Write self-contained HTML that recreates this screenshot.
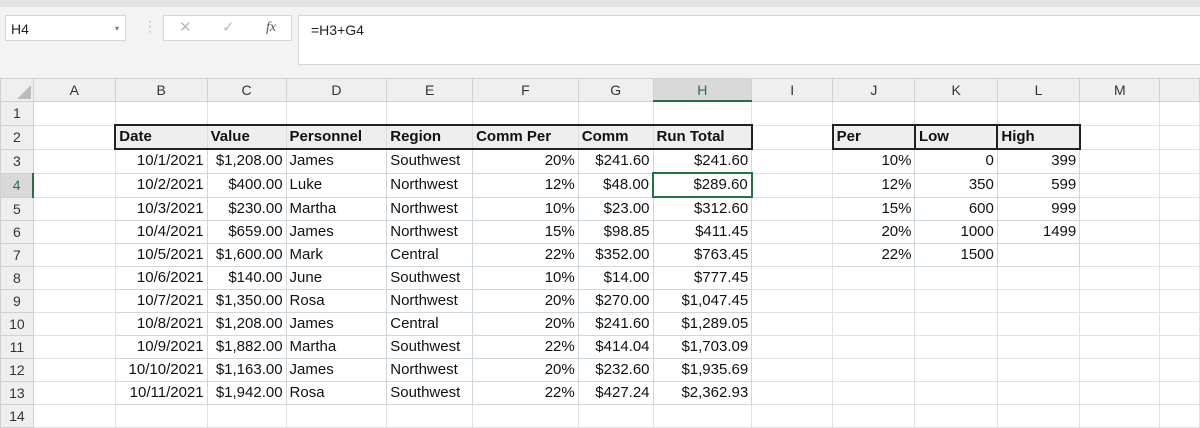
<!DOCTYPE html><html><head><style>
body{margin:0;width:1200px;height:425px;overflow:hidden;background:#fff;font-family:"Liberation Sans",sans-serif;position:relative}
.top{position:absolute;left:0;top:0;width:1200px;height:78px;background:#f3f3f3}
.top .strip{position:absolute;left:0;top:0;width:1200px;height:7px;background:#e3e3e3}
.nb{position:absolute;left:5px;top:15px;width:121px;height:26px;background:#fff;border:1px solid #d6d6d6;font-size:14px;line-height:26px;padding-left:5px;box-sizing:border-box;color:#222}
.fx{position:absolute;left:163px;top:15px;width:129px;height:26px;background:#fff;border:1px solid #d6d6d6;box-sizing:border-box;color:#bbb;font-size:15px;line-height:24px}
.fb{position:absolute;left:298px;top:15px;width:910px;height:50px;background:#fff;border:1px solid #d6d6d6;font-size:14px;padding:6px 0 0 12px;box-sizing:border-box;color:#222}
table{position:absolute;left:0;top:78px;border-collapse:collapse;table-layout:fixed;font-size:15px;color:#111}
td{border:1px solid #e1e1e1;height:22px;padding:0 3px;white-space:nowrap;overflow:hidden;line-height:20px}
tr.h td{background:#efefef;color:#333;text-align:center;height:21px;border-color:#d0d0d0;font-size:14px}
td.rh{background:#efefef;color:#333;text-align:center;padding:0;font-size:14px;border-color:#d0d0d0}
.r{text-align:right}
.b{font-weight:bold;background:#eeeeee;border:2px solid #222 !important}
.c{font-weight:bold;background:#eeeeee;border-top:2px solid #222 !important;border-bottom:2px solid #222 !important;border-left:1px solid #ddd;border-right:1px solid #ddd}
.d{border-color:#cfd7de}
</style></head><body>
<div class="top"><div class="strip"></div>
<div class="nb">H4<span style="position:absolute;right:6px;top:0;font-size:8px;color:#777">▾</span></div>
<div style="position:absolute;left:143px;top:18px;color:#bbb;font-size:14px">⋮</div>
<div class="fx"><span style="position:absolute;left:15px">✕</span><span style="position:absolute;left:58px">✓</span><span style="position:absolute;left:102px;font-family:'Liberation Serif',serif;font-style:italic;color:#555;font-size:14px">fx</span></div>
<div class="fb">=H3+G4</div></div>
<table>
<colgroup><col style="width:33px"><col style="width:83px"><col style="width:92px"><col style="width:79px"><col style="width:101px"><col style="width:86px"><col style="width:106px"><col style="width:75px"><col style="width:99px"><col style="width:82px"><col style="width:83px"><col style="width:83px"><col style="width:83px"><col style="width:81px"><col style="width:40px"></colgroup>
<tr class="h"><td style="position:relative"><span style="position:absolute;right:2px;bottom:2px;width:0;height:0;border-left:14px solid transparent;border-bottom:14px solid #bbb"></span></td><td>A</td><td>B</td><td>C</td><td>D</td><td>E</td><td>F</td><td>G</td><td style="background:#d9d9d9;color:#217346;border-bottom:2px solid #217346">H</td><td>I</td><td>J</td><td>K</td><td>L</td><td>M</td><td></td></tr>
<tr><td class="rh">1</td><td></td><td></td><td></td><td></td><td></td><td></td><td></td><td></td><td></td><td></td><td></td><td></td><td></td><td></td></tr>
<tr><td class="rh">2</td><td></td><td class="c" style="border-left:2px solid #222 !important">Date</td><td class="c">Value</td><td class="c">Personnel</td><td class="c">Region</td><td class="c">Comm Per</td><td class="c">Comm</td><td class="c" style="border-right:2px solid #222 !important">Run Total</td><td></td><td class="b">Per</td><td class="b">Low</td><td class="b">High</td><td></td><td></td></tr>
<tr><td class="rh">3</td><td></td><td class="r d">10/1/2021</td><td class="r d">$1,208.00</td><td class="d">James</td><td class="d">Southwest</td><td class="r d">20%</td><td class="r d">$241.60</td><td class="r d">$241.60</td><td></td><td class="r d">10%</td><td class="r d">0</td><td class="r d">399</td><td></td><td></td></tr>
<tr><td class="rh" style="background:#d9d9d9;color:#217346;border-right:2px solid #217346">4</td><td></td><td class="r d">10/2/2021</td><td class="r d">$400.00</td><td class="d">Luke</td><td class="d">Northwest</td><td class="r d">12%</td><td class="r d">$48.00</td><td class="r" style="border:2px solid #217346">$289.60</td><td></td><td class="r d">12%</td><td class="r d">350</td><td class="r d">599</td><td></td><td></td></tr>
<tr><td class="rh">5</td><td></td><td class="r d">10/3/2021</td><td class="r d">$230.00</td><td class="d">Martha</td><td class="d">Northwest</td><td class="r d">10%</td><td class="r d">$23.00</td><td class="r d">$312.60</td><td></td><td class="r d">15%</td><td class="r d">600</td><td class="r d">999</td><td></td><td></td></tr>
<tr><td class="rh">6</td><td></td><td class="r d">10/4/2021</td><td class="r d">$659.00</td><td class="d">James</td><td class="d">Northwest</td><td class="r d">15%</td><td class="r d">$98.85</td><td class="r d">$411.45</td><td></td><td class="r d">20%</td><td class="r d">1000</td><td class="r d">1499</td><td></td><td></td></tr>
<tr><td class="rh">7</td><td></td><td class="r d">10/5/2021</td><td class="r d">$1,600.00</td><td class="d">Mark</td><td class="d">Central</td><td class="r d">22%</td><td class="r d">$352.00</td><td class="r d">$763.45</td><td></td><td class="r d">22%</td><td class="r d">1500</td><td class="d"></td><td></td><td></td></tr>
<tr><td class="rh">8</td><td></td><td class="r d">10/6/2021</td><td class="r d">$140.00</td><td class="d">June</td><td class="d">Southwest</td><td class="r d">10%</td><td class="r d">$14.00</td><td class="r d">$777.45</td><td></td><td></td><td></td><td></td><td></td><td></td></tr>
<tr><td class="rh">9</td><td></td><td class="r d">10/7/2021</td><td class="r d">$1,350.00</td><td class="d">Rosa</td><td class="d">Northwest</td><td class="r d">20%</td><td class="r d">$270.00</td><td class="r d">$1,047.45</td><td></td><td></td><td></td><td></td><td></td><td></td></tr>
<tr><td class="rh">10</td><td></td><td class="r d">10/8/2021</td><td class="r d">$1,208.00</td><td class="d">James</td><td class="d">Central</td><td class="r d">20%</td><td class="r d">$241.60</td><td class="r d">$1,289.05</td><td></td><td></td><td></td><td></td><td></td><td></td></tr>
<tr><td class="rh">11</td><td></td><td class="r d">10/9/2021</td><td class="r d">$1,882.00</td><td class="d">Martha</td><td class="d">Southwest</td><td class="r d">22%</td><td class="r d">$414.04</td><td class="r d">$1,703.09</td><td></td><td></td><td></td><td></td><td></td><td></td></tr>
<tr><td class="rh">12</td><td></td><td class="r d">10/10/2021</td><td class="r d">$1,163.00</td><td class="d">James</td><td class="d">Northwest</td><td class="r d">20%</td><td class="r d">$232.60</td><td class="r d">$1,935.69</td><td></td><td></td><td></td><td></td><td></td><td></td></tr>
<tr><td class="rh">13</td><td></td><td class="r d">10/11/2021</td><td class="r d">$1,942.00</td><td class="d">Rosa</td><td class="d">Southwest</td><td class="r d">22%</td><td class="r d">$427.24</td><td class="r d">$2,362.93</td><td></td><td></td><td></td><td></td><td></td><td></td></tr>
<tr><td class="rh">14</td><td></td><td></td><td></td><td></td><td></td><td></td><td></td><td></td><td></td><td></td><td></td><td></td><td></td><td></td></tr>
</table>
</body></html>
